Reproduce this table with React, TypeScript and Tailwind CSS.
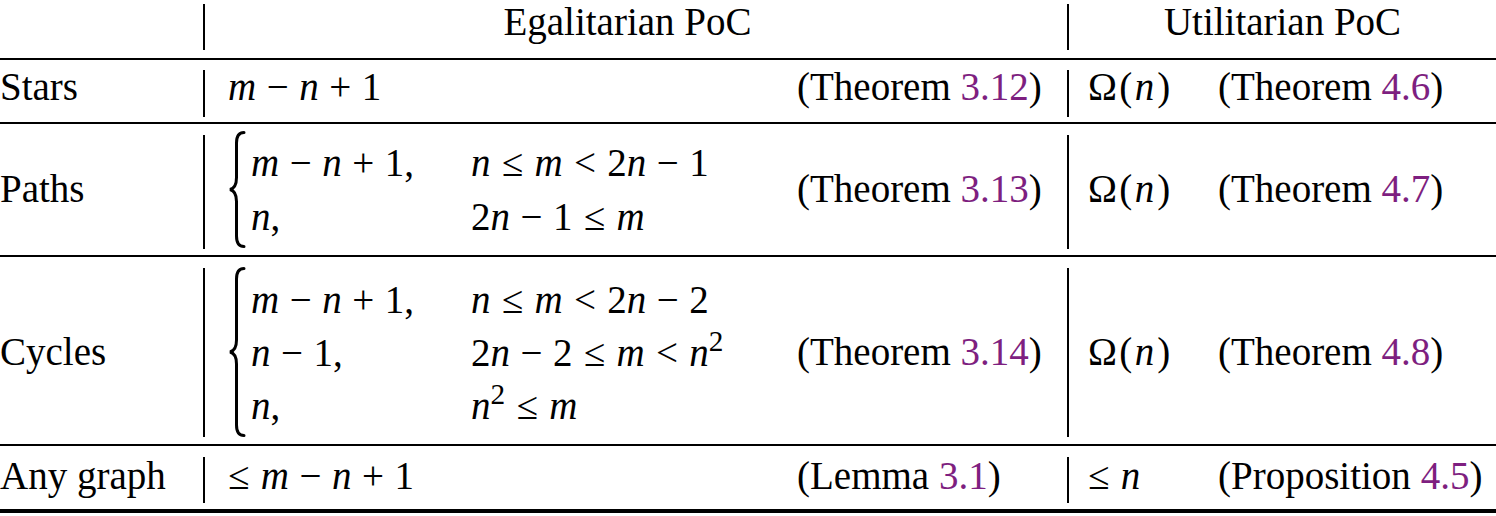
import React from 'react';

const LINK = 'text-[#7e1f80]';

const V = ({ children }: { children: React.ReactNode }) => <i className="italic">{children}</i>;
const Bin = ({ c }: { c: string }) => <span className="mx-[0.27em]">{c}</span>;
const Rel = ({ c }: { c: string }) => <span className="mx-[0.29em]">{c}</span>;

const Ref = ({ kind, num }: { kind: string; num: string }) => (
  <span className="whitespace-nowrap">
    ({kind} <span className={LINK}>{num}</span>)
  </span>
);

const VRule = ({ className = '' }: { className?: string }) => (
  <div className={`w-[2px] shrink-0 bg-black ${className}`} />
);

const HRule = ({ thick = false }: { thick?: boolean }) => (
  <div className={thick ? 'h-[4px] bg-black' : 'h-[2px] bg-black'} />
);

// left curly brace for the cases blocks
function Brace({ h }: { h: number }) {
  const m = h / 2;
  const d = `M16 1.5 C10.5 1.5 8.5 5 8.5 12 L8.5 ${m - 12} C8.5 ${m - 4} 6 ${m - 1} 2 ${m} C6 ${m + 1} 8.5 ${m + 4} 8.5 ${m + 12} L8.5 ${h - 12} C8.5 ${h - 5} 10.5 ${h - 1.5} 16 ${h - 1.5}`;
  return (
    <svg width="18" height={h} viewBox={`0 0 18 ${h}`} className="mr-[5px] shrink-0">
      <path d={d} fill="none" stroke="black" strokeWidth="3" strokeLinecap="round" />
    </svg>
  );
}

const MNPlus1 = () => (
  <>
    <V>m</V>
    <Bin c="−" />
    <V>n</V>
    <Bin c="+" />1
  </>
);

const Omega = () => (
  <>
    Ω<span className="mx-[0.06em]">(</span>
    <V>n</V>
    <span className="ml-[0.08em]">)</span>
  </>
);

interface RowProps {
  label: string;
  h: string;
  shift: string;
  rule: string;
  egal: React.ReactNode;
  egalRef: React.ReactNode;
  util: React.ReactNode;
  utilRef: React.ReactNode;
}

const Row = ({ label, h, shift, rule, egal, egalRef, util, utilRef }: RowProps) => (
  <div className={`flex ${h}`}>
    <div className={`flex w-[203px] shrink-0 items-center whitespace-nowrap ${shift}`}>{label}</div>
    <VRule className={rule} />
    <div className={`flex w-[862px] shrink-0 items-center ${shift}`}>
      <div className="w-[592px] shrink-0 whitespace-nowrap pl-[23px]">{egal}</div>
      <div>{egalRef}</div>
    </div>
    <VRule className={rule} />
    <div className={`flex flex-1 items-center ${shift}`}>
      <div className="w-[149px] shrink-0 whitespace-nowrap pl-[19px]">{util}</div>
      <div>{utilRef}</div>
    </div>
  </div>
);

export default function App() {
  return (
    <div className="h-[516px] w-[1496px] overflow-hidden bg-white font-['Liberation_Serif',serif] text-[39px] leading-[1.15] text-black">
      {/* header */}
      <div className="flex h-[58px] leading-[44px]">
        <div className="w-[203px] shrink-0" />
        <VRule className="mt-[4px] mb-[8px]" />
        <div className="flex w-[862px] shrink-0 items-start justify-center pr-[17px]">Egalitarian PoC</div>
        <VRule className="mt-[4px] mb-[8px]" />
        <div className="flex flex-1 items-start justify-center">Utilitarian PoC</div>
      </div>
      <HRule />

      <Row
        label="Stars"
        h="h-[62px]"
        shift="pb-[8px]"
        rule="mt-[10px] mb-[5px]"
        egal={<MNPlus1 />}
        egalRef={<Ref kind="Theorem" num="3.12" />}
        util={<Omega />}
        utilRef={<Ref kind="Theorem" num="4.6" />}
      />
      <HRule />

      <Row
        label="Paths"
        h="h-[131px]"
        shift="pb-0"
        rule="mt-[11px] mb-[6px]"
        egal={
          <div className="flex items-center">
            <Brace h={117} />
            <div className="grid grid-cols-[220px_auto] leading-[54px]">
              <div>
                <MNPlus1 />,
              </div>
              <div>
                <V>n</V>
                <Rel c="≤" />
                <V>m</V>
                <Rel c="<" />2<V>n</V>
                <Bin c="−" />1
              </div>
              <div>
                <V>n</V>,
              </div>
              <div>
                2<V>n</V>
                <Bin c="−" />1<Rel c="≤" />
                <V>m</V>
              </div>
            </div>
          </div>
        }
        egalRef={<Ref kind="Theorem" num="3.13" />}
        util={<Omega />}
        utilRef={<Ref kind="Theorem" num="4.7" />}
      />
      <HRule />

      <Row
        label="Cycles"
        h="h-[187px]"
        shift="pt-[3px]"
        rule="mt-[11px] mb-[7px]"
        egal={
          <div className="flex items-center">
            <Brace h={170} />
            <div className="grid grid-cols-[220px_auto] leading-[53px]">
              <div>
                <MNPlus1 />,
              </div>
              <div>
                <V>n</V>
                <Rel c="≤" />
                <V>m</V>
                <Rel c="<" />2<V>n</V>
                <Bin c="−" />2
              </div>
              <div>
                <V>n</V>
                <Bin c="−" />1,
              </div>
              <div>
                2<V>n</V>
                <Bin c="−" />2<Rel c="≤" />
                <V>m</V>
                <Rel c="<" />
                <V>n</V>
                <sup>2</sup>
              </div>
              <div>
                <V>n</V>,
              </div>
              <div>
                <V>n</V>
                <sup>2</sup>
                <Rel c="≤" />
                <V>m</V>
              </div>
            </div>
          </div>
        }
        egalRef={<Ref kind="Theorem" num="3.14" />}
        util={<Omega />}
        utilRef={<Ref kind="Theorem" num="4.8" />}
      />
      <HRule />

      <Row
        label="Any graph"
        h="h-[63px]"
        shift="pb-[2px]"
        rule="mt-[11px] mb-[6px]"
        egal={
          <>
            ≤<span className="mr-[0.29em]" />
            <MNPlus1 />
          </>
        }
        egalRef={<Ref kind="Lemma" num="3.1" />}
        util={
          <>
            ≤<span className="mr-[0.29em]" />
            <V>n</V>
          </>
        }
        utilRef={<Ref kind="Proposition" num="4.5" />}
      />
      <HRule thick />
    </div>
  );
}
